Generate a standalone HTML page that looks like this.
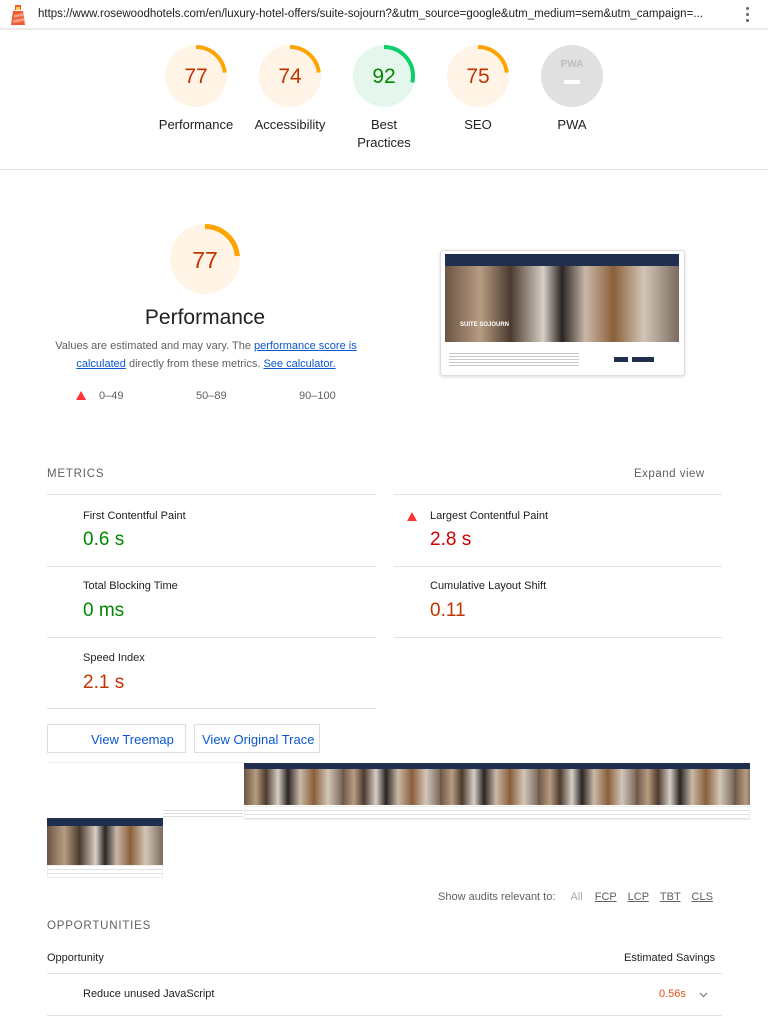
<!DOCTYPE html>
<html><head><meta charset="utf-8"><style>
*{margin:0;padding:0;box-sizing:border-box}
body{width:768px;height:1024px;overflow:hidden;background:#fff;font-family:"Liberation Sans",sans-serif;color:#212121;position:relative}
.a{position:absolute}
.lbl{font-size:13px;color:#212121;text-align:center;width:100px;line-height:18px}
.num{position:absolute;width:62px;text-align:center;font-size:21px}
.mt{font-size:11px;color:#212121}
.mv{font-size:19px}
.hr{position:absolute;height:1px;background:#e0e0e0}
.thumb{position:absolute;background:linear-gradient(90deg,#6b5443 0%,#b79c82 15%,#4b3a2e 28%,#d8cfc6 42%,#2a2422 50%,#c9b9a8 60%,#8a5f3a 72%,#d2c6b8 85%,#7b6a5e 100%)}
.nav{position:absolute;background:#1f2f4d}
</style></head><body>
<svg class="a" style="left:10px;top:4px" width="16" height="22" viewBox="0 0 16 22"><rect x="5" y="1" width="6" height="5" fill="#f15b30"/><rect x="6" y="3" width="4" height="3" fill="#fbd14b"/><path d="M3 7h10l2 14H1z" fill="#f15b30"/><path d="M4 11l9-2 .4 3-9.6 2zM3 16l11-2 .4 3-11.6 2z" fill="#f79a7d"/></svg>
<div class="a" style="left:38px;top:8px;font-size:11.5px;color:#212121;white-space:nowrap">https://www.rosewoodhotels.com/en/luxury-hotel-offers/suite-sojourn?&amp;utm_source=google&amp;utm_medium=sem&amp;utm_campaign=...</div>
<div class="a" style="left:746px;top:7px;width:3px;height:3px;border-radius:2px;background:#666;box-shadow:0 6px 0 #666,0 12px 0 #666"></div>
<div class="hr" style="left:0;top:28px;width:768px;height:2px;background:#ebebeb"></div>

<svg class="a" style="left:165px;top:45px" width="62" height="62"><circle cx="31" cy="31" r="31" fill="#fff4e6"/><circle cx="31" cy="31" r="29" fill="none" stroke="#ffa400" stroke-width="4" stroke-dasharray="42 200" transform="rotate(-90 31 31)"/></svg>
<div class="a num" style="left:165px;top:65px;color:#c33300">77</div>
<div class="a lbl" style="left:146px;top:116px">Performance</div>

<svg class="a" style="left:259px;top:45px" width="62" height="62"><circle cx="31" cy="31" r="31" fill="#fff4e6"/><circle cx="31" cy="31" r="29" fill="none" stroke="#ffa400" stroke-width="4" stroke-dasharray="42 200" transform="rotate(-90 31 31)"/></svg>
<div class="a num" style="left:259px;top:65px;color:#c33300">74</div>
<div class="a lbl" style="left:240px;top:116px">Accessibility</div>

<svg class="a" style="left:353px;top:45px" width="62" height="62"><circle cx="31" cy="31" r="31" fill="#e5f7ed"/><circle cx="31" cy="31" r="29" fill="none" stroke="#0cce6b" stroke-width="4" stroke-dasharray="52 200" transform="rotate(-90 31 31)"/></svg>
<div class="a num" style="left:353px;top:65px;color:#008800">92</div>
<div class="a lbl" style="left:334px;top:116px">Best<br>Practices</div>

<svg class="a" style="left:447px;top:45px" width="62" height="62"><circle cx="31" cy="31" r="31" fill="#fff4e6"/><circle cx="31" cy="31" r="29" fill="none" stroke="#ffa400" stroke-width="4" stroke-dasharray="42 200" transform="rotate(-90 31 31)"/></svg>
<div class="a num" style="left:447px;top:65px;color:#c33300">75</div>
<div class="a lbl" style="left:428px;top:116px">SEO</div>

<svg class="a" style="left:541px;top:45px" width="62" height="62"><circle cx="31" cy="31" r="31" fill="#e0e0e0"/><text x="31" y="22" text-anchor="middle" font-size="10" font-weight="bold" fill="#bdbdbd" font-family="Liberation Sans">PWA</text><rect x="23" y="35" width="16" height="4" rx="1" fill="#fff"/></svg>
<div class="a lbl" style="left:522px;top:116px">PWA</div>

<div class="hr" style="left:0;top:169px;width:768px"></div>

<svg class="a" style="left:170px;top:224px" width="70" height="70"><circle cx="35" cy="35" r="35" fill="#fff4e6"/><circle cx="35" cy="35" r="32.5" fill="none" stroke="#ffa400" stroke-width="5" stroke-dasharray="48 300" transform="rotate(-90 35 35)"/></svg>
<div class="a" style="left:170px;top:247px;width:70px;text-align:center;font-size:23px;color:#c33300">77</div>
<div class="a" style="left:105px;top:306px;width:200px;text-align:center;font-size:21px;color:#212121">Performance</div>
<div class="a" style="left:50px;top:337px;width:312px;text-align:center;font-size:11px;line-height:18px;color:#616161">Values are estimated and may vary. The <span style="color:#0b57d0;text-decoration:underline">performance score is calculated</span> directly from these metrics. <span style="color:#0b57d0;text-decoration:underline">See calculator.</span></div>
<svg class="a" style="left:76px;top:391px" width="10" height="10"><path d="M5 0L10 9H0z" fill="#ff3333"/></svg>
<div class="a" style="left:99px;top:390px;font-size:11px;color:#616161">0–49</div>
<div class="a" style="left:196px;top:390px;font-size:11px;color:#616161">50–89</div>
<div class="a" style="left:299px;top:390px;font-size:11px;color:#616161">90–100</div>

<div class="a" style="left:440px;top:250px;width:245px;height:126px;border:1px solid #ddd;border-radius:3px;box-shadow:0 1px 3px rgba(0,0,0,.15);background:#fff"></div>
<div class="nav" style="left:445px;top:254px;width:234px;height:12px"></div>
<div class="thumb" style="left:445px;top:266px;width:234px;height:76px"></div>
<div class="a" style="left:460px;top:322px;font-size:6px;font-weight:bold;color:#fff">SUITE SOJOURN</div>
<div class="a" style="left:449px;top:351px;width:130px;height:16px;background:repeating-linear-gradient(#fff 0 2px,#c8c8c8 2px 3px)"></div>
<div class="a" style="left:614px;top:357px;width:14px;height:5px;background:#1f2f4d"></div>
<div class="a" style="left:632px;top:357px;width:22px;height:5px;background:#1f2f4d"></div>

<div class="a" style="left:47px;top:468px;font-size:11.5px;letter-spacing:.8px;color:#616161">METRICS</div>
<div class="a" style="left:634px;top:468px;font-size:11.5px;letter-spacing:.5px;color:#616161">Expand view</div>
<div class="hr" style="left:47px;top:494px;width:329px"></div>
<div class="hr" style="left:394px;top:494px;width:328px"></div>
<div class="a mt" style="left:83px;top:510px">First Contentful Paint</div>
<div class="a mv" style="left:83px;top:529px;color:#008800">0.6 s</div>
<svg class="a" style="left:407px;top:512px" width="10" height="10"><path d="M5 0L10 9H0z" fill="#ff3333"/></svg>
<div class="a mt" style="left:430px;top:510px">Largest Contentful Paint</div>
<div class="a mv" style="left:430px;top:529px;color:#cc0000">2.8 s</div>
<div class="hr" style="left:47px;top:566px;width:329px"></div>
<div class="hr" style="left:394px;top:566px;width:328px"></div>
<div class="a mt" style="left:83px;top:580px">Total Blocking Time</div>
<div class="a mv" style="left:83px;top:600px;color:#008800">0 ms</div>
<div class="a mt" style="left:430px;top:580px">Cumulative Layout Shift</div>
<div class="a mv" style="left:430px;top:600px;color:#c33300">0.11</div>
<div class="hr" style="left:47px;top:637px;width:329px"></div>
<div class="hr" style="left:394px;top:637px;width:328px"></div>
<div class="a mt" style="left:83px;top:652px">Speed Index</div>
<div class="a mv" style="left:83px;top:672px;color:#c33300">2.1 s</div>
<div class="hr" style="left:47px;top:708px;width:329px"></div>

<div class="a" style="left:47px;top:724px;width:139px;height:29px;border:1px solid #ddd;font-size:13px;color:#0b57d0;padding:7px 0 0 43px">View Treemap</div>
<div class="a" style="left:194px;top:724px;width:126px;height:29px;border:1px solid #ddd;font-size:13px;color:#0b57d0;padding:7px 0 0 7px">View Original Trace</div>

<div class="hr" style="left:47px;top:762px;width:196px;background:#eee"></div>
<div class="a" style="left:163px;top:808px;width:80px;height:11px;background:repeating-linear-gradient(#fff 0 2px,#ddd 2px 3px)"></div>
<div class="nav" style="left:244px;top:763px;width:506px;height:6px"></div>
<div class="thumb" style="left:244px;top:769px;width:506px;height:36px;background:repeating-linear-gradient(90deg,#6b5443 0px,#b79c82 12px,#4b3a2e 22px,#d8cfc6 34px,#2a2422 44px,#c9b9a8 56px,#8a5f3a 70px,#d2c6b8 84px,#7b6a5e 98px)"></div>
<div class="a" style="left:244px;top:806px;width:506px;height:14px;border:1px solid #eee;background:repeating-linear-gradient(#fff 0 3px,#e2e2e2 3px 4px)"></div>
<div class="nav" style="left:47px;top:818px;width:116px;height:8px"></div>
<div class="thumb" style="left:47px;top:826px;width:116px;height:39px"></div>
<div class="a" style="left:47px;top:865px;width:116px;height:13px;border:1px solid #eee;background:repeating-linear-gradient(#fff 0 3px,#e2e2e2 3px 4px)"></div>

<div class="a" style="left:438px;top:891px;font-size:11px;color:#616161;white-space:nowrap">Show audits relevant to: <span style="color:#aaa;margin-left:12px">All</span> <span style="margin-left:9px;text-decoration:underline">FCP</span> <span style="margin-left:8px;text-decoration:underline">LCP</span> <span style="margin-left:8px;text-decoration:underline">TBT</span> <span style="margin-left:8px;text-decoration:underline">CLS</span></div>

<div class="a" style="left:47px;top:920px;font-size:11.5px;letter-spacing:.8px;color:#616161">OPPORTUNITIES</div>
<div class="a" style="left:47px;top:952px;font-size:11px">Opportunity</div>
<div class="a" style="left:624px;top:952px;font-size:11px">Estimated Savings</div>
<div class="hr" style="left:47px;top:973px;width:675px"></div>
<div class="a" style="left:83px;top:988px;font-size:11px">Reduce unused JavaScript</div>
<div class="a" style="left:659px;top:988px;font-size:11px;color:#e8501a">0.56s</div>
<svg class="a" style="left:699px;top:992px" width="9" height="6"><path d="M1 1l3.5 3.5L8 1" fill="none" stroke="#777" stroke-width="1.2"/></svg>
<div class="hr" style="left:47px;top:1015px;width:675px"></div>
</body></html>
